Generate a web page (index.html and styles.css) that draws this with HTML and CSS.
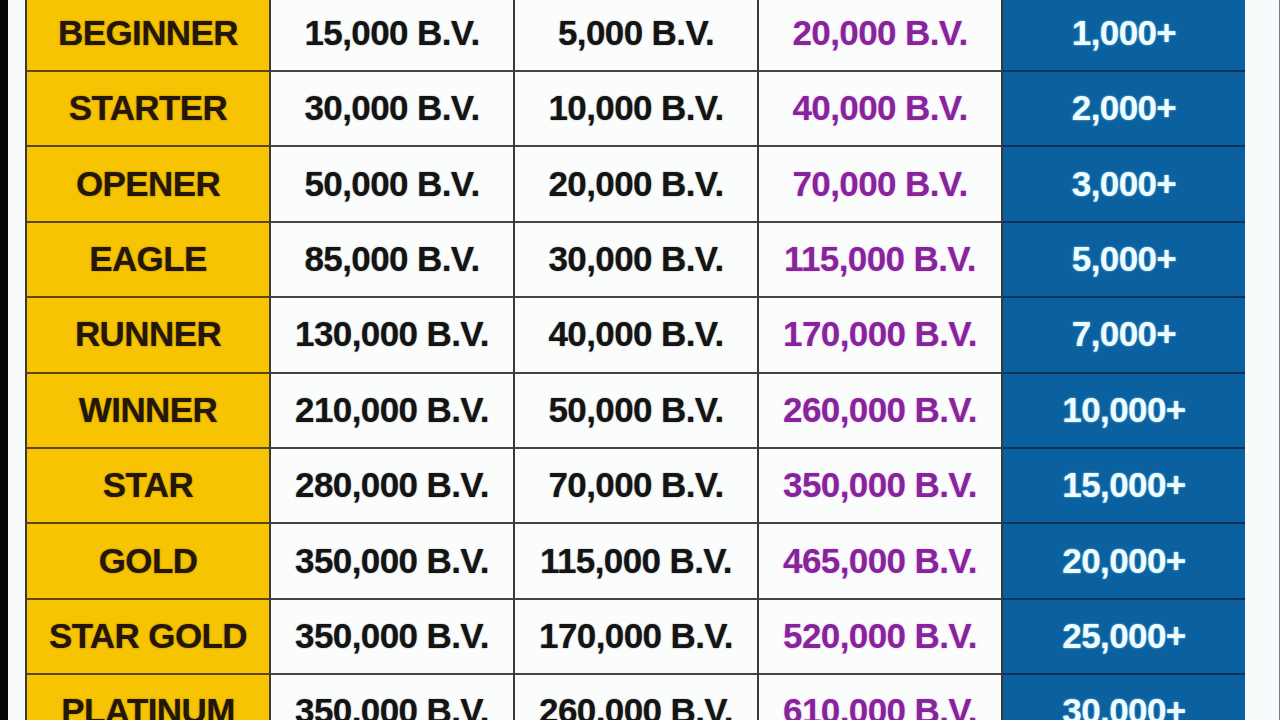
FILE: index.html
```html
<!DOCTYPE html>
<html>
<head>
<meta charset="utf-8">
<link rel="stylesheet" href="styles.css">
</head>
<body>
<div class="frame">
  <div class="table">
    <div class="cell rank">BEGINNER</div><div class="cell">15,000 B.V.</div><div class="cell">5,000 B.V.</div><div class="cell total">20,000 B.V.</div><div class="cell reward">1,000+</div>
    <div class="cell rank">STARTER</div><div class="cell">30,000 B.V.</div><div class="cell">10,000 B.V.</div><div class="cell total">40,000 B.V.</div><div class="cell reward">2,000+</div>
    <div class="cell rank">OPENER</div><div class="cell">50,000 B.V.</div><div class="cell">20,000 B.V.</div><div class="cell total">70,000 B.V.</div><div class="cell reward">3,000+</div>
    <div class="cell rank">EAGLE</div><div class="cell">85,000 B.V.</div><div class="cell">30,000 B.V.</div><div class="cell total">115,000 B.V.</div><div class="cell reward">5,000+</div>
    <div class="cell rank">RUNNER</div><div class="cell">130,000 B.V.</div><div class="cell">40,000 B.V.</div><div class="cell total">170,000 B.V.</div><div class="cell reward">7,000+</div>
    <div class="cell rank">WINNER</div><div class="cell">210,000 B.V.</div><div class="cell">50,000 B.V.</div><div class="cell total">260,000 B.V.</div><div class="cell reward">10,000+</div>
    <div class="cell rank">STAR</div><div class="cell">280,000 B.V.</div><div class="cell">70,000 B.V.</div><div class="cell total">350,000 B.V.</div><div class="cell reward">15,000+</div>
    <div class="cell rank">GOLD</div><div class="cell">350,000 B.V.</div><div class="cell">115,000 B.V.</div><div class="cell total">465,000 B.V.</div><div class="cell reward">20,000+</div>
    <div class="cell rank">STAR GOLD</div><div class="cell">350,000 B.V.</div><div class="cell">170,000 B.V.</div><div class="cell total">520,000 B.V.</div><div class="cell reward">25,000+</div>
    <div class="cell rank">PLATINUM</div><div class="cell">350,000 B.V.</div><div class="cell">260,000 B.V.</div><div class="cell total">610,000 B.V.</div><div class="cell reward">30,000+</div>
  </div>
</div>
</body>
</html>
```

FILE: styles.css
```css
html, body {
  margin: 0;
  padding: 0;
  background: #050505;
  width: 1280px;
  height: 720px;
  overflow: hidden;
}

.frame {
  margin-left: 8px;
  width: 1236px;
  height: 720px;
  background: #f7fbfc;
  padding-left: 17px;
  padding-right: 18px;
  border-right: 2px solid #7a7f82;
  overflow: hidden;
}

.table {
  margin-top: -3.4px;
  display: grid;
  grid-template-columns: repeat(5, 242px);
  grid-auto-rows: 75.4px;
  column-gap: 2px;
  padding-left: 2px;
  width: 1218px;
  background: #3a3a3a;
}

.cell {
  box-sizing: border-box;
  display: flex;
  align-items: center;
  justify-content: center;
  padding-bottom: 1px;
  background: #fbfcfc;
  border-bottom: 2px solid #444;
  font-family: "Liberation Sans", Arial, sans-serif;
  font-weight: bold;
  font-size: 35px;
  letter-spacing: -0.6px;
  color: #141414;
  text-shadow: 0 0 1.5px rgba(0, 0, 0, 0.45);
  white-space: nowrap;
}

.rank {
  background: #f6c402;
  border-bottom-color: #5a4710;
  color: #24170a;
  text-shadow: 0 0 1.5px rgba(60, 30, 0, 0.6);
}

.total {
  color: #86259a;
  text-shadow: 0 0 2px rgba(220, 110, 240, 0.55);
}

.reward {
  background: #0b61a0;
  border-bottom-color: #0a3558;
  color: #eefcff;
  text-shadow: 0 0 2px rgba(170, 240, 255, 0.8);
}
```
